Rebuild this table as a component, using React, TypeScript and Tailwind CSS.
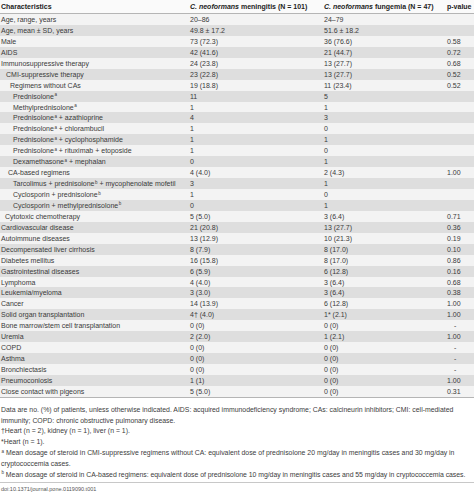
/**
 * Table 1 — characteristics of C. neoformans meningitis vs fungemia patients.
 */

type Row = { label: React.ReactNode; indent: number; a: React.ReactNode; b: React.ReactNode; p?: string };

const Sup = ({ children }: { children: React.ReactNode }) => (
  <span className="text-[4.5px] leading-none align-[2.5px] ml-[0.5px]">{children}</span>
);

const rows: Row[] = [
  { label: "Age, range, years", indent: 0, a: "20–86", b: "24–79" },
  { label: "Age, mean ± SD, years", indent: 0, a: "49.8 ± 17.2", b: "51.6 ± 18.2" },
  { label: "Male", indent: 0, a: "73 (72.3)", b: "36 (76.6)", p: "0.58" },
  { label: "AIDS", indent: 0, a: "42 (41.6)", b: "21 (44.7)", p: "0.72" },
  { label: "Immunosuppressive therapy", indent: 0, a: "24 (23.8)", b: "13 (27.7)", p: "0.68" },
  { label: "CMI-suppressive therapy", indent: 5, a: "23 (22.8)", b: "13 (27.7)", p: "0.52" },
  { label: "Regimens without CAs", indent: 9, a: "19 (18.8)", b: "11 (23.4)", p: "0.52" },
  { label: <>Prednisolone<Sup>a</Sup></>, indent: 12, a: "11", b: "5" },
  { label: <>Methylprednisolone<Sup>a</Sup></>, indent: 12, a: "1", b: "1" },
  { label: <>Prednisolone<Sup>a</Sup> + azathioprine</>, indent: 12, a: "4", b: "3" },
  { label: <>Prednisolone<Sup>a</Sup> + chlorambucil</>, indent: 12, a: "1", b: "0" },
  { label: <>Prednisolone<Sup>a</Sup> + cyclophosphamide</>, indent: 12, a: "1", b: "1" },
  { label: <>Prednisolone<Sup>a</Sup> + rituximab + etoposide</>, indent: 12, a: "1", b: "0" },
  { label: <>Dexamethasone<Sup>a</Sup> + mephalan</>, indent: 12, a: "0", b: "1" },
  { label: "CA-based regimens", indent: 7, a: "4 (4.0)", b: "2 (4.3)", p: "1.00" },
  { label: <>Tarcolimus + prednisolone<Sup>b</Sup> + mycophenolate mofetil</>, indent: 12, a: "3", b: "1" },
  { label: <>Cyclosporin + prednisolone<Sup>b</Sup></>, indent: 12, a: "1", b: "0" },
  { label: <>Cyclosporin + methylprednisolone<Sup>b</Sup></>, indent: 12, a: "0", b: "1" },
  { label: "Cytotoxic chemotherapy", indent: 4, a: "5 (5.0)", b: "3 (6.4)", p: "0.71" },
  { label: "Cardiovascular disease", indent: 0, a: "21 (20.8)", b: "13 (27.7)", p: "0.36" },
  { label: "Autoimmune diseases", indent: 0, a: "13 (12.9)", b: "10 (21.3)", p: "0.19" },
  { label: "Decompensated liver cirrhosis", indent: 0, a: "8 (7.9)", b: "8 (17.0)", p: "0.10" },
  { label: "Diabetes mellitus", indent: 0, a: "16 (15.8)", b: "8 (17.0)", p: "0.86" },
  { label: "Gastrointestinal diseases", indent: 0, a: "6 (5.9)", b: "6 (12.8)", p: "0.16" },
  { label: "Lymphoma", indent: 0, a: "4 (4.0)", b: "3 (6.4)", p: "0.68" },
  { label: "Leukemia/myeloma", indent: 0, a: "3 (3.0)", b: "3 (6.4)", p: "0.38" },
  { label: "Cancer", indent: 0, a: "14 (13.9)", b: "6 (12.8)", p: "1.00" },
  { label: "Solid organ transplantation", indent: 0, a: "4† (4.0)", b: "1* (2.1)", p: "1.00" },
  { label: "Bone marrow/stem cell transplantation", indent: 0, a: "0 (0)", b: "0 (0)", p: "-" },
  { label: "Uremia", indent: 0, a: "2 (2.0)", b: "1 (2.1)", p: "1.00" },
  { label: "COPD", indent: 0, a: "0 (0)", b: "0 (0)", p: "-" },
  { label: "Asthma", indent: 0, a: "0 (0)", b: "0 (0)", p: "-" },
  { label: "Bronchiectasis", indent: 0, a: "0 (0)", b: "0 (0)", p: "-" },
  { label: "Pneumoconiosis", indent: 0, a: "1 (1)", b: "0 (0)", p: "1.00" },
  { label: "Close contact with pigeons", indent: 0, a: "5 (5.0)", b: "0 (0)", p: "0.31" },
];

const cols = "grid grid-cols-[190px_134px_123px_1fr]";

export default function App() {
  return (
    <div className="w-[474px] h-[493px] overflow-hidden bg-white text-[#3a3a3a] text-[7px] leading-[11px] font-['Liberation_Sans',Arial,sans-serif]">
      <div className={`${cols} h-[14px] items-center bg-[#fafafa] border-b border-[#b5b5b5] font-bold text-[#222]`}>
        <div className="pl-[1px]">Characteristics</div>
        <div><i>C. neoformans</i> meningitis (N = 101)</div>
        <div><i>C. neoformans</i> fungemia (N = 47)</div>
        <div className="whitespace-nowrap">p-value</div>
      </div>
      {rows.map((r, i) => (
        <div
          key={i}
          className={`${cols} h-[10.95px] items-center whitespace-nowrap ${i % 2 === 0 ? "bg-[#f3f3f3]" : "bg-[#dedede]"}`}
        >
          <div style={{ paddingLeft: r.indent + 1 }}>{r.label}</div>
          <div>{r.a}</div>
          <div>{r.b}</div>
          <div className={r.p === "-" ? "pl-[7px]" : ""}>{r.p ?? ""}</div>
        </div>
      ))}
      <div className="border-t border-[#b5b5b5]" />
      <div className="pt-[7px] pl-[1px] pr-[2px] text-[6.9px] leading-[10.8px] text-[#3c3c3c] pb-[1px]">
        <p>
          Data are no. (%) of patients, unless otherwise indicated. AIDS: acquired immunodeficiency syndrome; CAs: calcineurin inhibitors; CMI: cell-mediated immunity; COPD: chronic obstructive pulmonary disease.
        </p>
        <p>†Heart (n = 2), kidney (n = 1), liver (n = 1).</p>
        <p>*Heart (n = 1).</p>
        <p>
          <Sup>a</Sup> Mean dosage of steroid in CMI-suppressive regimens without CA: equivalent dose of prednisolone 20 mg/day in meningitis cases and 30 mg/day in cryptococcemia cases.
        </p>
        <p className="whitespace-nowrap tracking-[-0.03px]">
          <Sup>b</Sup> Mean dosage of steroid in CA-based regimens: equivalent dose of prednisolone 10 mg/day in meningitis cases and 55 mg/day in cryptococcemia cases.
        </p>
      </div>
      <div className="border-t border-[#c8c8c8] mt-[1px]" />
      <div className="pl-[1px] pt-[2px] text-[5.5px] leading-[8px] text-[#555]">doi:10.1371/journal.pone.0119090.t001</div>
    </div>
  );
}
